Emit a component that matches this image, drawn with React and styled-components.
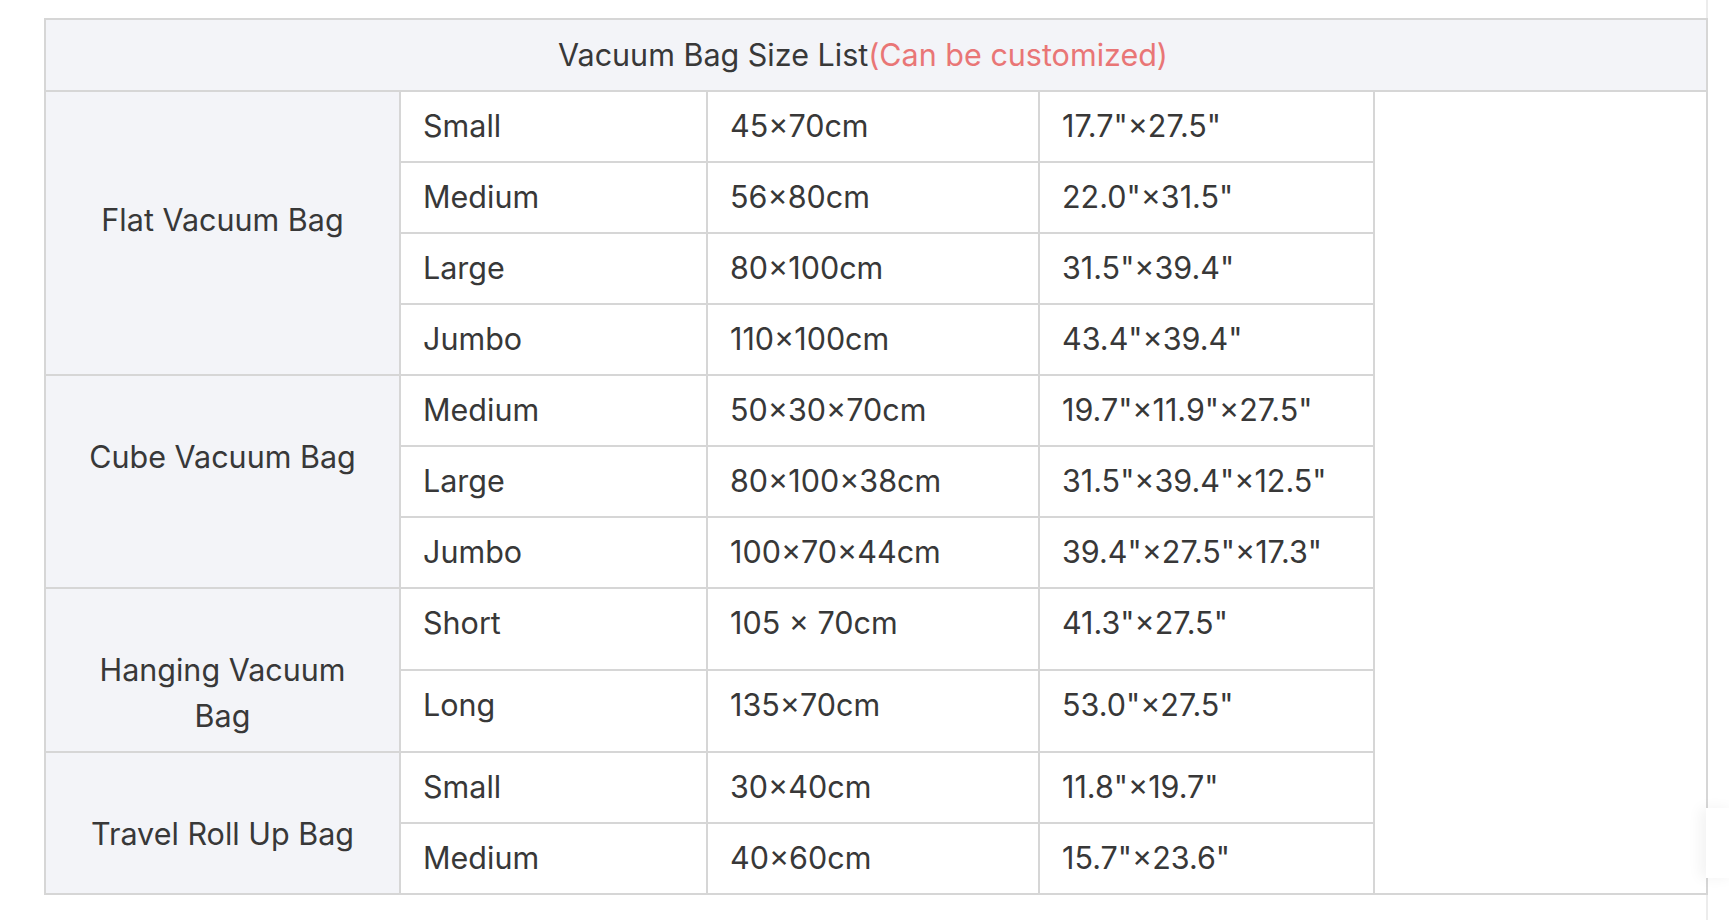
import styled, { createGlobalStyle } from "styled-components";

const GlobalStyle = createGlobalStyle`
  html, body {
    margin: 0;
    padding: 0;
    background: #fff;
  }
  body {
    font-family: Inter, "Liberation Sans", Arial, sans-serif;
    color: #333;
  }
`;

const Page = styled.div`
  width: 1708px;
  min-height: 920px;
  box-sizing: border-box;
  border-right: 2px solid #ececec;
  padding: 18px 0 0 44px;
  position: relative;
`;

const Table = styled.table`
  width: 1662px;
  table-layout: fixed;
  border-collapse: collapse;
  font-size: 30.5px;
  line-height: 46px;
  color: #383838;
`;

const HeadCell = styled.td`
  height: 70px;
  padding: 0 26px 0 0;
  text-align: center;
  background: #f3f4f8;
  border: 2px solid #d6d6d6;
`;

const Note = styled.span`
  color: #e97676;
`;

const GroupCell = styled.td`
  padding: ${(p) => (p.shift > 0 ? p.shift * 2 : 0)}px 34px
    ${(p) => (p.shift < 0 ? -p.shift * 2 : 0)}px;
  text-align: center;
  vertical-align: middle;
  background: #f3f4f8;
  border: 2px solid #d6d6d6;
`;

const Row = styled.tr`
  height: ${(p) => (p.tall ? "82px" : "71px")};
`;

const Cell = styled.td`
  padding: 11px 22px 0;
  text-align: left;
  vertical-align: top;
  border: 2px solid #d6d6d6;
  white-space: nowrap;
`;

const Blank = styled.td`
  border: 2px solid #d6d6d6;
`;

const Shade = styled.div`
  position: absolute;
  right: -30px;
  top: 808px;
  width: 30px;
  height: 70px;
  box-shadow: -6px 0 14px rgba(0, 0, 0, 0.05);
  background: #fff;
`;

const groups = [
  {
    name: "Flat Vacuum Bag",
    shift: -13,
    rows: [
      ["Small", "45×70cm", '17.7"×27.5"'],
      ["Medium", "56×80cm", '22.0"×31.5"'],
      ["Large", "80×100cm", '31.5"×39.4"'],
      ["Jumbo", "110×100cm", '43.4"×39.4"'],
    ],
  },
  {
    name: "Cube Vacuum Bag",
    shift: -25,
    rows: [
      ["Medium", "50×30×70cm", '19.7"×11.9"×27.5"'],
      ["Large", "80×100×38cm", '31.5"×39.4"×12.5"'],
      ["Jumbo", "100×70×44cm", '39.4"×27.5"×17.3"'],
    ],
  },
  {
    name: "Hanging Vacuum Bag",
    shift: 23,
    tall: true,
    rows: [
      ["Short", "105 × 70cm", '41.3"×27.5"'],
      ["Long", "135×70cm", '53.0"×27.5"'],
    ],
  },
  {
    name: "Travel Roll Up Bag",
    shift: 11,
    rows: [
      ["Small", "30×40cm", '11.8"×19.7"'],
      ["Medium", "40×60cm", '15.7"×23.6"'],
    ],
  },
];

const total = groups.reduce((n, g) => n + g.rows.length, 0);

export default function App() {
  return (
    <>
      <GlobalStyle />
      <Page>
        <Table>
          <colgroup>
            <col style={{ width: 355 }} />
            <col style={{ width: 307 }} />
            <col style={{ width: 332 }} />
            <col style={{ width: 335 }} />
            <col style={{ width: 333 }} />
          </colgroup>
          <tbody>
            <tr>
              <HeadCell colSpan={5}>
                Vacuum Bag Size List<Note>(Can be customized)</Note>
              </HeadCell>
            </tr>
            {groups.map((g, gi) =>
              g.rows.map((r, i) => (
                <Row key={g.name + i} tall={g.tall}>
                  {i === 0 && (
                    <GroupCell rowSpan={g.rows.length} shift={g.shift}>
                      {g.name}
                    </GroupCell>
                  )}
                  <Cell>{r[0]}</Cell>
                  <Cell>{r[1]}</Cell>
                  <Cell>{r[2]}</Cell>
                  {gi === 0 && i === 0 && <Blank rowSpan={total} />}
                </Row>
              ))
            )}
          </tbody>
        </Table>
        <Shade />
      </Page>
    </>
  );
}
